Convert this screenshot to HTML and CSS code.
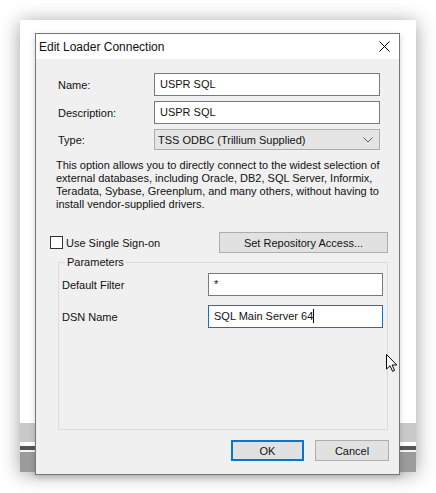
FILE: index.html
```html
<!DOCTYPE html>
<html>
<head>
<meta charset="utf-8">
<link rel="stylesheet" href="styles.css">
</head>
<body>
<div class="frame">
  <div class="dialog">
    <div class="titlebar">
      <span class="title">Edit Loader Connection</span>
      <svg class="close" width="11" height="11" viewBox="0 0 11 11"><path d="M0.5 0.5 L10.5 10.5 M10.5 0.5 L0.5 10.5" stroke="#000" stroke-width="1" fill="none"/></svg>
    </div>
    <div class="content">
      <div class="row"><span class="lbl">Name:</span><div class="field">USPR SQL</div></div>
      <div class="row"><span class="lbl">Description:</span><div class="field">USPR SQL</div></div>
      <div class="row sel-row"><span class="lbl">Type:</span><div class="select"><span>TSS ODBC (Trillium Supplied)</span><svg class="chev" width="10" height="6" viewBox="0 0 10 6"><path d="M0.5 0.5 L5 5 L9.5 0.5" stroke="#606060" stroke-width="1" fill="none"/></svg></div></div>
      <p class="desc">This option allows you to directly connect to the widest selection of<br>external databases, including Oracle, DB2, SQL Server, Informix,<br>Teradata, Sybase, Greenplum, and many others, without having to<br>install vendor-supplied drivers.</p>
      <div class="sso">
        <div class="check"><span class="box"></span><span>Use Single Sign-on</span></div>
        <div class="btn repo">Set Repository Access...</div>
      </div>
      <fieldset class="group">
        <legend>Parameters</legend>
        <div class="prow"><span class="plbl">Default Filter</span><div class="field pfield">*</div></div>
        <div class="prow second"><span class="plbl">DSN Name</span><div class="field pfield focus">SQL Main Server 64<span class="caret"></span></div></div>
      </fieldset>
      <div class="buttons">
        <div class="btn ok">OK</div>
        <div class="btn cancel">Cancel</div>
      </div>
    </div>
  </div>
</div>
<svg class="cursor" width="12" height="18" viewBox="0 0 12 18"><path d="M0.5 0.5 L0.5 15 L4 11.8 L6.6 17.3 L8.6 16.4 L6.1 11 L10.8 11 Z" fill="#fff" stroke="#000" stroke-width="1" stroke-linejoin="miter"/></svg>
</body>
</html>
```

FILE: styles.css
```css
html, body {
  margin: 0;
  padding: 0;
}
body {
  width: 436px;
  height: 493px;
  overflow: hidden;
  background: #ffffff;
  position: relative;
  font-family: "Liberation Sans", Arial, sans-serif;
  font-size: 11px;
  color: #111;
}
.frame {
  margin: 20px 0 0 20px;
  width: 396px;
  height: 452px;
  box-sizing: border-box;
  padding: 13px 0 0 15px;
  background: linear-gradient(to bottom,
    #ffffff 0, #ffffff 403px,
    #c9c9c9 403px, #c9c9c9 422px,
    #ffffff 422px, #ffffff 426px,
    #555555 426px, #555555 430px,
    #f4f4f4 430px, #f4f4f4 432px,
    #9b9b9b 432px, #9b9b9b 452px);
  box-shadow: 0 2px 18px rgba(0, 0, 0, 0.38);
}
.dialog {
  width: 365px;
  height: 442px;
  box-sizing: border-box;
  border: 1px solid #767676;
  background: #f0f0f0;
  box-shadow: 0 2px 6px rgba(0, 0, 0, 0.18);
}
.titlebar {
  height: 25px;
  background: #ffffff;
  display: flex;
  align-items: center;
  justify-content: space-between;
  padding: 0 9px 0 3px;
}
.title {
  font-size: 12px;
}
.close {
  display: block;
}
.content {
  padding: 14px 19px 0 22px;
}
.row {
  display: flex;
  align-items: center;
  height: 23px;
  margin-bottom: 5px;
}
.lbl {
  width: 96px;
  flex: none;
}
.field {
  box-sizing: border-box;
  height: 23px;
  border: 1px solid #7a7a7a;
  background: #ffffff;
  padding-left: 5px;
  line-height: 21px;
  flex: 1;
  white-space: nowrap;
}
.sel-row {
  height: 21px;
  margin-bottom: 0;
}
.select {
  box-sizing: border-box;
  flex: 1;
  height: 21px;
  border: 1px solid #adadad;
  background: #e5e5e5;
  padding: 0 6px 0 3px;
  display: flex;
  align-items: center;
  justify-content: space-between;
}
.chev {
  display: block;
}
.desc {
  margin: 9px 0 0 -2px;
  line-height: 13px;
  white-space: nowrap;
}
.sso {
  display: flex;
  align-items: center;
  justify-content: space-between;
  height: 21px;
  margin: 21px -8px 0 -8px;
}
.check {
  display: flex;
  align-items: center;
}
.box {
  width: 13px;
  height: 13px;
  box-sizing: border-box;
  border: 1px solid #333333;
  background: #ffffff;
  margin-right: 3px;
}
.btn {
  box-sizing: border-box;
  height: 21px;
  border: 1px solid #adadad;
  background: #e1e1e1;
  display: flex;
  align-items: center;
  justify-content: center;
}
.repo {
  width: 169px;
}
.group {
  margin: 2px -8px 0 0;
  padding: 0 4px 101px 3px;
  border: 1px solid #dcdcdc;
  min-width: 0;
}
.group legend {
  margin-left: 3px;
  padding: 0 2px;
  line-height: 14px;
}
.prow {
  display: flex;
  align-items: center;
  height: 23px;
  margin-top: 4px;
}
.prow.second {
  margin-top: 9px;
}
.plbl {
  flex: 1;
}
.pfield {
  flex: none;
  width: 175px;
}
.focus {
  border-color: #0078d7;
}
.caret {
  display: inline-block;
  width: 1px;
  height: 14px;
  background: #000;
  vertical-align: middle;
  margin-top: -2px;
}
.buttons {
  display: flex;
  justify-content: flex-end;
  gap: 11px;
  margin: 10px -9px 0 0;
}
.ok {
  width: 73px;
  border-color: #0078d7;
  box-shadow: inset 0 0 0 1px #0078d7;
}
.cancel {
  width: 74px;
}
.cursor {
  position: absolute;
  left: 386px;
  top: 354px;
}
```
